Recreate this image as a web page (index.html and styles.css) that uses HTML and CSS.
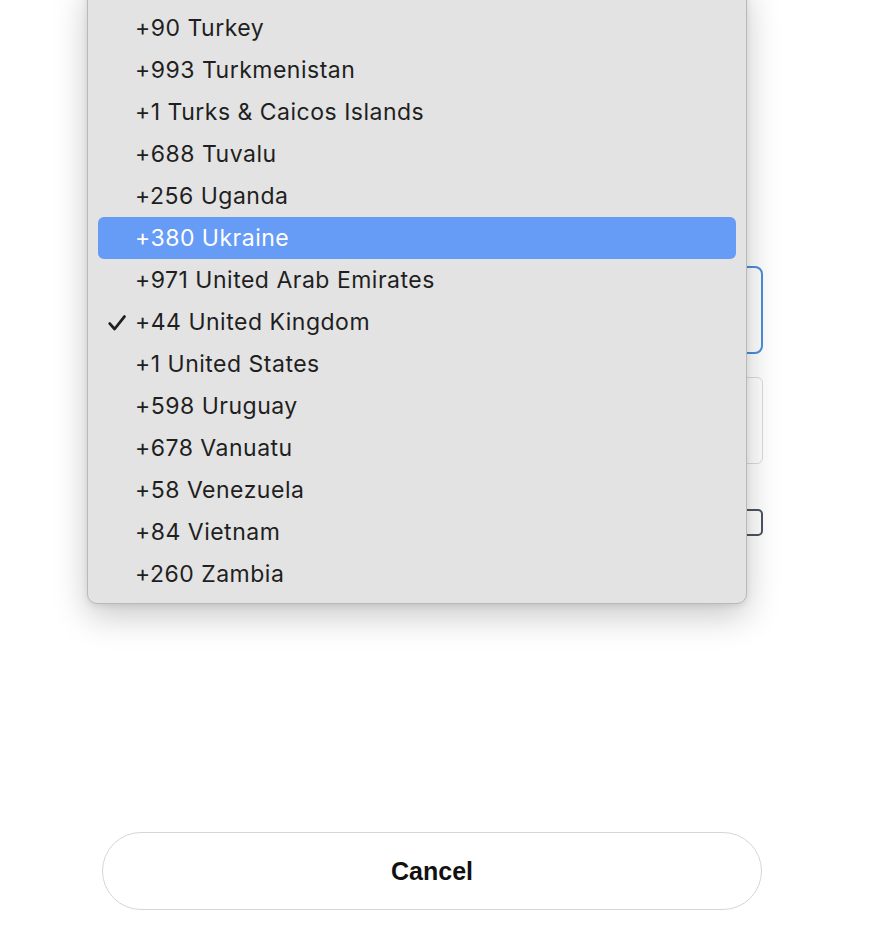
FILE: index.html
```html
<!DOCTYPE html>
<html lang="en">
<head>
<meta charset="utf-8">
<title>Country code</title>
<link rel="stylesheet" href="styles.css">
</head>
<body>
<div class="page">
  <form class="form">
    <div class="field-input"></div>
    <div class="field-box"></div>
    <div class="check-row"><span class="checkbox"></span></div>
    <button type="button" class="cancel">Cancel</button>
  </form>

  <ul class="menu">
    <li class="item">+90 Turkey</li>
    <li class="item">+993 Turkmenistan</li>
    <li class="item">+1 Turks &amp; Caicos Islands</li>
    <li class="item">+688 Tuvalu</li>
    <li class="item">+256 Uganda</li>
    <li class="item active">+380 Ukraine</li>
    <li class="item">+971 United Arab Emirates</li>
    <li class="item checked"><svg class="tick" viewBox="0 0 18 16" width="18" height="16"><path d="M1.8 8.6 L6.6 14 L16.4 1.6" fill="none" stroke="#1f1f1f" stroke-width="2.8" stroke-linecap="round" stroke-linejoin="round"/></svg>+44 United Kingdom</li>
    <li class="item">+1 United States</li>
    <li class="item">+598 Uruguay</li>
    <li class="item">+678 Vanuatu</li>
    <li class="item">+58 Venezuela</li>
    <li class="item">+84 Vietnam</li>
    <li class="item">+260 Zambia</li>
  </ul>
</div>
</body>
</html>
```

FILE: styles.css
```css
* { box-sizing: border-box; }

html, body {
  margin: 0;
  padding: 0;
  background: #ffffff;
  height: 100%;
  overflow: hidden;
}

.page {
  position: relative;
  width: 872px;
  height: 936px;
}

.form {
  display: flex;
  flex-direction: column;
  width: 661px;
  margin: 0 0 0 102px;
  padding-top: 266px;
}

.field-input {
  height: 88px;
  border: 2px solid #4a8fdc;
  border-radius: 8px;
}

.field-box {
  margin-top: 23px;
  height: 87px;
  border: 1px solid #dcdcdc;
  border-radius: 6px;
}

.check-row {
  display: flex;
  justify-content: flex-end;
  margin-top: 45px;
}

.checkbox {
  width: 26px;
  height: 27px;
  border: 2.5px solid #4b5563;
  border-radius: 5px;
}

.cancel {
  margin-top: 296px;
  height: 78px;
  width: 660px;
  background: #ffffff;
  border: 1px solid #d6d6d6;
  border-radius: 39px;
  font-family: "Liberation Sans", Arial, sans-serif;
  font-weight: 700;
  font-size: 25px;
  color: #111111;
  padding: 0;
}

.menu {
  position: absolute;
  left: 87px;
  top: -20px;
  width: 660px;
  margin: 0;
  padding: 26px 0 8px 0;
  list-style: none;
  background: #e3e3e3;
  border: 1px solid #b9b9b9;
  border-radius: 10px;
  box-shadow: 0 12px 34px rgba(0, 0, 0, 0.22), 0 2px 6px rgba(0, 0, 0, 0.08);
  font-family: Inter, "Noto Sans", sans-serif;
  font-size: 23px;
  letter-spacing: 0.5px;
  color: #1f1f1f;
}

.item {
  position: relative;
  display: flex;
  align-items: center;
  height: 42px;
  margin: 0 10px;
  padding-left: 37px;
  border-radius: 6px;
  white-space: nowrap;
}

.item.active {
  background: #669bf6;
  color: #ffffff;
}

.tick {
  position: absolute;
  left: 10px;
  top: 14px;
}
```
